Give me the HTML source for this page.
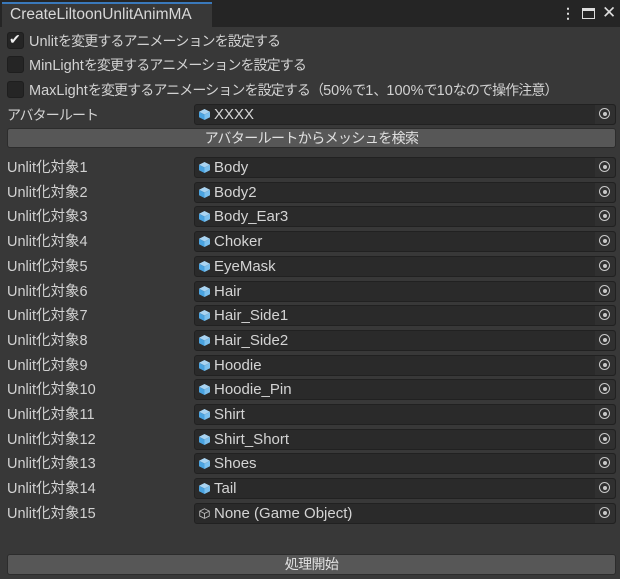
<!DOCTYPE html>
<html><head><meta charset="utf-8"><style>
*{margin:0;padding:0;box-sizing:border-box}
body{width:620px;height:579px;background:#383838;font-family:"Liberation Sans","Noto Sans CJK JP",sans-serif;color:#d2d2d2;font-size:14px;position:relative;overflow:hidden}
.top{position:absolute;left:0;top:0;width:620px;height:27px;background:#252525}
.tab{position:absolute;left:2px;top:2px;width:210px;height:26px;background:#383838;border-top:2px solid #3a79bb;padding-left:8px;line-height:22px;font-size:15.5px;color:#d8d8d8}
.ab{position:absolute;font-size:14px;color:#ddd}
.cb{position:absolute;left:7px;width:17px;height:17px;background:#252525;border:1px solid #1e1e1e;border-radius:3px}
.t{position:absolute;white-space:nowrap;line-height:20px}
.c{font-size:14px;letter-spacing:-0.9px}
.e{letter-spacing:0;font-size:14.5px}
.l{font-size:14.5px}
.f{position:absolute;left:194px;width:422px;height:21px;background:#2a2a2a;border:1px solid #212121;border-radius:3px}
.f .n{position:absolute;left:19px;top:0;line-height:19px;color:#d4d4d4;font-size:15px}
.f .ic{position:absolute;left:4px;top:4px;width:11px;height:11px}
.f .p{position:absolute;right:0;top:0;width:20px;height:19px;background:#303030;border-radius:0 3px 3px 0}
.f .p:after{content:"";position:absolute;left:4px;top:3px;width:9px;height:9px;border:1.5px solid #c8c8c8;border-radius:50%}
.f .p:before{content:"";position:absolute;left:8px;top:7px;width:4px;height:4px;background:#c8c8c8;border-radius:50%;z-index:1}
.btn{position:absolute;left:7px;width:609px;height:20px;background:#575757;border:1px solid #2c2c2c;border-radius:3px;text-align:center;line-height:18px;color:#e0e0e0;font-size:14px;letter-spacing:-0.6px}
</style></head><body>
<div class="top"></div>
<div class="tab">CreateLiltoonUnlitAnimMA</div>
<div class="ab" style="left:561px;top:5px;font-weight:bold">⋮</div>
<div style="position:absolute;left:582px;top:8px;width:13px;height:11px;border:1.5px solid #ddd;border-top-width:3px"></div>
<div class="ab" style="left:602px;top:3px;font-size:17px">✕</div>

<div class="cb" style="top:32px"></div><div class="t" style="left:9px;top:29px;color:#eee;font-size:14px">✔</div>
<div class="t c" style="left:29px;top:31px"><span class="e">Unlit</span>を変更するアニメーションを設定する</div>
<div class="cb" style="top:56px"></div>
<div class="t c" style="left:29px;top:55px"><span class="e">MinLight</span>を変更するアニメーションを設定する</div>
<div class="cb" style="top:81px"></div>
<div class="t c" style="left:29px;top:80px"><span class="e">MaxLight</span>を変更するアニメーションを設定する（<span class="e">50%</span>で<span class="e">1</span>、<span class="e">100%</span>で<span class="e">10</span>なので操作注意）</div>

<div class="t c" style="left:7px;top:105px">アバタールート</div>
<div class="f" style="top:104px"><svg class="ic" viewBox="0 0 12 12"><path d="M6 0L12 3 6 6 0 3Z" fill="#a9d4f2"/><path d="M0 3L6 6 6 12 0 9Z" fill="#4aa3e0"/><path d="M12 3L6 6 6 12 12 9Z" fill="#7cc0ee"/></svg><span class="n">XXXX</span><div class="p"></div></div>
<div class="btn" style="top:128px">アバタールートからメッシュを検索</div>

<div id="rows"></div>
<script>
var names=["Body","Body2","Body_Ear3","Choker","EyeMask","Hair","Hair_Side1","Hair_Side2","Hoodie","Hoodie_Pin","Shirt","Shirt_Short","Shoes","Tail","None (Game Object)"];
var h="";
for(var i=0;i<15;i++){var y=Math.round(157+i*24.7);
var ic=i<14?'<svg class="ic" viewBox="0 0 12 12"><path d="M6 0L12 3 6 6 0 3Z" fill="#a9d4f2"/><path d="M0 3L6 6 6 12 0 9Z" fill="#4aa3e0"/><path d="M12 3L6 6 6 12 12 9Z" fill="#7cc0ee"/></svg>':'<svg class="ic" viewBox="0 0 12 12"><path d="M6 .8L11.2 3.4 11.2 8.8 6 11.3 .8 8.8 .8 3.4Z M.8 3.4L6 6 11.2 3.4 M6 6V11.3" fill="none" stroke="#bbb" stroke-width="1"/></svg>';
h+='<div class="t l" style="left:7px;top:'+(y+1)+'px">Unlit化対象'+(i+1)+'</div><div class="f" style="top:'+y+'px">'+ic+'<span class="n">'+names[i]+'</span><div class="p"></div></div>';}
document.getElementById("rows").innerHTML=h;
</script>
<div class="btn" style="top:554px;height:21px">処理開始</div>
</body></html>
